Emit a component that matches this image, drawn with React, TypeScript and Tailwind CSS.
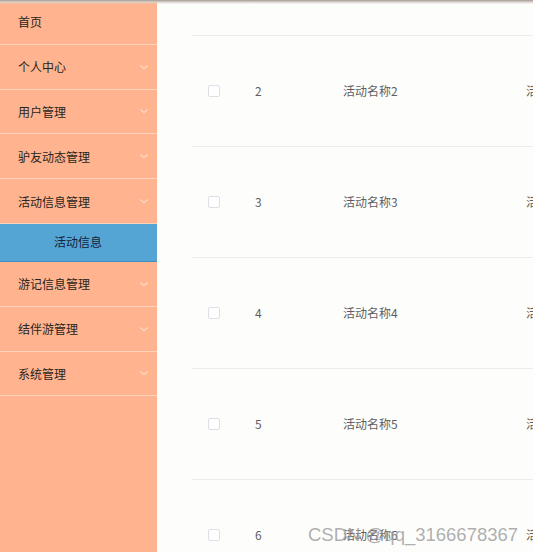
import React from "react";

const menu = [
  { label: "首页", arrow: false },
  { label: "个人中心", arrow: true },
  { label: "用户管理", arrow: true },
  { label: "驴友动态管理", arrow: true },
  { label: "活动信息管理", arrow: true, open: true },
  { label: "游记信息管理", arrow: true },
  { label: "结伴游管理", arrow: true },
  { label: "系统管理", arrow: true },
];

const Chevron = () => (
  <svg width="10" height="10" viewBox="0 0 10 10" className="text-[#ffd9c4]">
    <path d="M1.5 3.5 L5 6.8 L8.5 3.5" fill="none" stroke="currentColor" strokeWidth="1.2" />
  </svg>
);

export default function App() {
  const rows = [2, 3, 4, 5, 6];
  return (
    <div
      className="relative w-[533px] h-[552px] overflow-hidden flex bg-[#fdfdfc]"
      style={{ fontFamily: '"Noto Sans CJK SC", "Noto Sans", sans-serif' }}
    >
      <div className="absolute top-0 left-0 right-0 h-[4px] bg-gradient-to-b from-[#a39a92] via-[#d8d2cc] to-transparent z-10" />
      <aside className="w-[157px] shrink-0 bg-[#ffb48f] flex flex-col">
        {menu.map((m) => (
          <React.Fragment key={m.label}>
            <div className="h-[44.8px] shrink-0 flex items-center justify-between pl-[18px] pr-[8px] border-b border-[#ffd2ba] text-[12px] text-[#2a2420]">
              <span className="pt-[1px]">{m.label}</span>
              {m.arrow && <Chevron />}
            </div>
            {m.open && (
              <div className="h-[38px] shrink-0 flex items-center pl-[54px] bg-[#55a5d4] border-b border-[#3f8fc0] text-[12px] text-[#16223a]">
                活动信息
              </div>
            )}
          </React.Fragment>
        ))}
      </aside>
      <main className="flex-1 pl-[35px]">
        <div className="h-[36px] border-b border-[#ececec]" />
        {rows.map((r) => (
          <div
            key={r}
            className="h-[111px] flex items-center border-b border-[#ececec] text-[12px] text-[#5f5f5f] whitespace-nowrap"
          >
            <div className="w-[63px] pl-[16px]">
              <div className="w-[12px] h-[12px] rounded-[2px] border border-[#dcdfe6] bg-white" />
            </div>
            <div className="w-[88px]">{r}</div>
            <div className="w-[183px]">活动名称{r}</div>
            <div>活</div>
          </div>
        ))}
      </main>
      <div className="absolute left-[308px] top-[521px] text-[18.5px] text-[#9a9a9a]/80 whitespace-nowrap" style={{ fontFamily: '"Liberation Sans", sans-serif' }}>
        CSDN @qq_3166678367
      </div>
    </div>
  );
}
